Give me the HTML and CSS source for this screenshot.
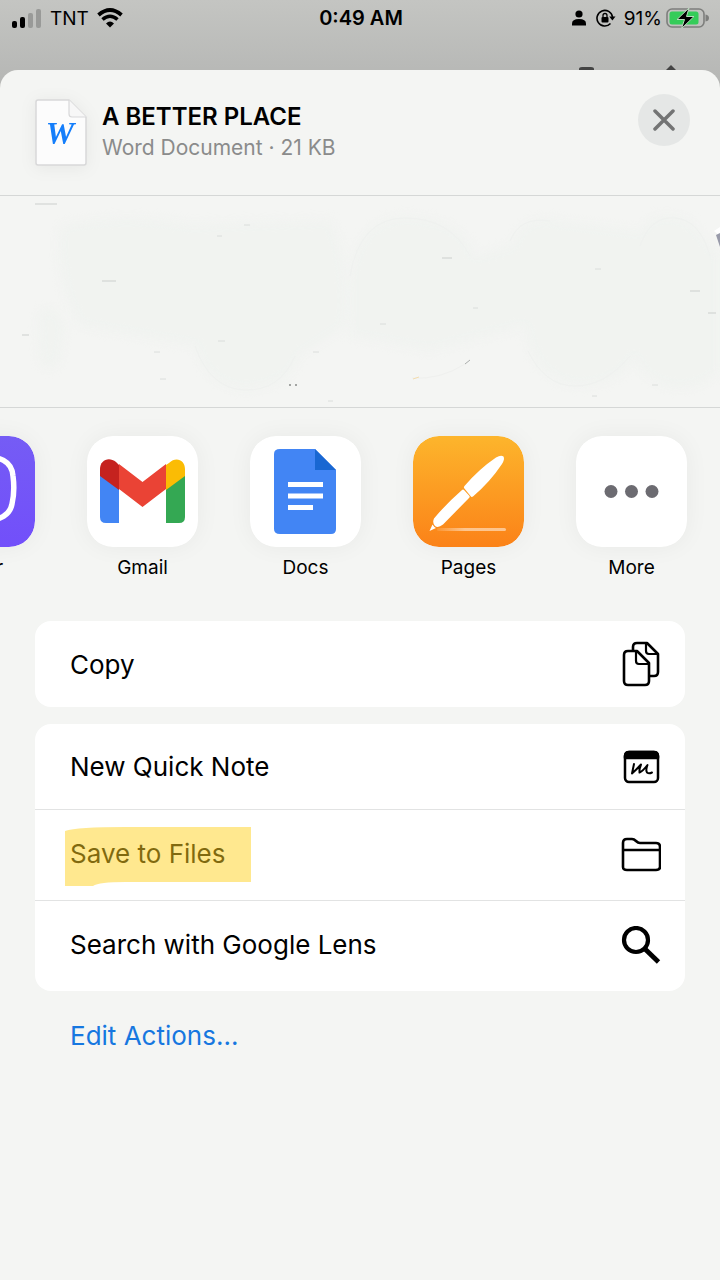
FILE: index.html
```html
<!DOCTYPE html>
<html lang="en">
<head>
    <meta charset="UTF-8">
    <meta name="viewport" content="width=device-width, initial-scale=1.0">
    <title>Share</title>
    <link rel="stylesheet" href="styles.css">
</head>
<body>

    <!-- Status bar -->
    <div class="status-bar">
        <div class="status-left">
            <svg width="30" height="20" viewBox="0 0 30 20">
                <rect x="0" y="13" width="5" height="7" rx="2" />
                <rect x="8" y="9" width="5" height="11" rx="2" />
                <rect x="16" y="5" width="5" height="15" rx="2" fill="#999a98" />
                <rect x="24" y="1" width="5" height="19" rx="2" fill="#999a98" />
            </svg>
            <span>TNT</span>
            <svg width="26" height="20" viewBox="0 0 26 20" fill="none" stroke="#000" stroke-width="3.800">
                <path d="M1.500 7Q13 -3 24.500 7" />
                <path d="M5.500 11.500Q13 5 20.500 11.500" stroke-width="3.600" />
                <path d="M9 15.500Q13 11.500 17 15.500L13 19.500Z" fill="#000" stroke="none" />
            </svg>
        </div>
        <div class="status-time">0:49 AM</div>
        <div class="status-right">
            <svg width="14" height="16" viewBox="0 0 14 16">
                <circle cx="7" cy="4" r="3.600" />
                <path d="M0 15.500V13.500Q0 9 7 9T14 13.500V15.500Z" />
            </svg>
            <svg class="lock" width="20" height="18" viewBox="0 0 20 18">
                <path d="M14.500 14.500A7.800 7.800 0 1 1 16.500 8" fill="none" stroke="#000" stroke-width="1.600" />
                <path d="M13.200 7.500H19.500L16.400 11.500Z" />
                <rect x="5.500" y="8" width="7" height="5.500" rx="1" />
                <path d="M7 8V6.500A2 2 0 0 1 11 6.500V8" fill="none" stroke="#000" stroke-width="1.300" />
            </svg>
            <span>91%</span>
            <svg width="44" height="22" viewBox="0 0 44 22">
                <rect x="1" y="2" width="37" height="18" rx="5" fill="none" stroke="#7d7e7c" stroke-width="1.600" />
                <rect x="3.500" y="4.500" width="29" height="13" rx="2.500" fill="#35cc59" />
                <path d="M39.500 7.500Q43 8 43 11T39.500 14.500Z" fill="#7d7e7c" />
                <path d="M23 1L11 12.500H18.500L15.500 21.500L28 9.500H20.500Z" stroke="#b9d9bd" stroke-width="1" />
            </svg>
        </div>
    </div>

    <!-- Toolbar of the app behind the sheet -->
    <div class="behind">
        <svg width="15" height="5" viewBox="0 0 15 5" fill="#444"><path d="M0 5V4Q0 2 3 2H12Q15 2 15 4V5Z" /></svg>
        <svg width="10" height="5" viewBox="0 0 10 5" fill="#444"><path d="M0 5L5 0L10 5Z" /></svg>
    </div>

    <div class="sheet">
        <div class="sheet-header">
            <svg class="doc-icon" width="52" height="68" viewBox="0 0 52 68">
                <path d="M3 1H34L51 18V64Q51 66 49 66H3Q1 66 1 64V3Q1 1 3 1Z" fill="#fcfcfc" stroke="#d8d8d9" stroke-width="1.500" />
                <path d="M34 1V15Q34 18 37 18H51" fill="#f7f7f7" stroke="#d8d8d9" stroke-width="1.200" />
                <text class="doc-letter" x="25" y="45" text-anchor="middle">W</text>
            </svg>
            <div class="doc-info">
                <h1>A BETTER PLACE</h1>
                <p>Word Document · 21 KB</p>
            </div>
            <button class="close" aria-label="Close">
                <svg width="22" height="22" viewBox="0 0 22 22" fill="none" stroke="#737474" stroke-width="3.500" stroke-linecap="round"><path d="M2 2L20 20M20 2L2 20" /></svg>
            </button>
        </div>

        <!-- Contacts row, wiped out -->
        <div class="contacts">
            <svg viewBox="0 0 720 211" preserveAspectRatio="none">
                <g class="smudge" fill="#eff1ef">
                    <path d="M60 30Q120 15 190 28L330 24Q350 60 345 130L300 160Q290 190 245 194Q205 190 195 150L80 130Q55 90 60 30Z" opacity=".6" />
                    <path d="M350 75Q360 20 410 20Q465 25 475 60L510 50Q525 15 560 25L640 35Q655 10 690 25L720 60V175Q700 194 675 192Q640 185 635 160Q620 190 575 190Q530 180 525 130L430 155L350 140Z" opacity=".6" />
                    <path d="M38 120Q50 100 65 130L60 165Q48 180 40 165Z" opacity=".6" />
                </g>
                <g fill="none" stroke="#eff1ef">
                    <path d="M350 80Q360 22 405 22T470 60" />
                    <path d="M510 45Q520 20 550 25" />
                    <path d="M640 50Q650 20 675 22T710 60" />
                    <path d="M195 150Q210 193 245 194T295 160" />
                    <path d="M528 155Q545 190 575 190T630 160" />
                </g>
                <g stroke="#cccfcd">
                    <path d="M35 8H57M102 85H116M442 62H452M690 95H700M708 117H716M22 139H29M7 212H12" />
                    <path d="M244 29H250M217 40H222M595 73H601M473 112H478M380 128H386M218 145H225M154 156H160M313 156H319M160 183H166M328 205H333M592 200H597M652 189H658" opacity=".6" />
                </g>
                <path d="M465 168L470 164" stroke="#aaadab" />
                <path d="M412 182Q440 184 465 168" fill="none" stroke="#eff0ee" />
                <path d="M413 183L419 181" stroke="#f3dcae" />
                <path d="M290 188V190M295 189H297" stroke="#888a89" stroke-width="1.500" />
                <path d="M714 35L720 31V40Z" fill="#fff" />
                <path d="M716 39L720 37V51Z" fill="#999baa" />
            </svg>
        </div>

        <!-- Apps -->
        <div class="apps">
            <a class="app" href="#">
                <svg viewBox="0 0 111 111">
                    <defs>
                        <linearGradient id="violet" x1="0" y1="0" x2="0" y2="1"><stop offset="0" stop-color="#755cf5" /><stop offset="1" stop-color="#724ffa" /></linearGradient>
                    </defs>
                    <rect width="111" height="111" rx="26" fill="url(#violet)" />
                    <path d="M55 20C76 20 88 25 89 40Q91 55 88 68C86 79 76 84 64 84L48 96V84C28 84 22 77 20 64Q18 50 21 38C24 24 36 20 55 20Z" fill="none" stroke="#fff" stroke-width="5.500" />
                </svg>
                <span>Viber</span>
            </a>
            <a class="app" href="#">
                <svg viewBox="0 0 111 111">
                    <rect width="111" height="111" rx="26" fill="#fff" />
                    <path d="M13 38L32 52V87H19Q13 87 13 81Z" fill="#4285f4" />
                    <path d="M79 52L98 38V81Q98 87 92 87H79Z" fill="#34a853" />
                    <path d="M79 29L82 27C89 20 98 24 98 33V40L79 54Z" fill="#fbbc04" />
                    <path d="M13 40V33C13 24 22 20 29 26L32 29V54Z" fill="#c5221f" />
                    <path d="M32 28L55.500 46L79 28V53L55.500 71L32 53Z" fill="#ea4335" />
                </svg>
                <span>Gmail</span>
            </a>
            <a class="app" href="#">
                <svg viewBox="0 0 111 111">
                    <rect width="111" height="111" rx="26" fill="#fff" />
                    <path d="M30 13H65L86 34V93Q86 98 81 98H30Q24 98 24 93V18Q24 13 30 13Z" fill="#4285f4" />
                    <path d="M65 13L86 34H65Z" fill="#1967d2" />
                    <path d="M38 48.500H73M38 60H73M38 71.500H63" stroke="#fff" stroke-width="5" />
                </svg>
                <span>Docs</span>
            </a>
            <a class="app" href="#">
                <svg viewBox="0 0 111 111">
                    <defs>
                        <linearGradient id="orange" x1="0" y1="0" x2="0" y2="1"><stop offset="0" stop-color="#fdb52c" /><stop offset="1" stop-color="#fb8218" /></linearGradient>
                        <linearGradient id="line" x1="0" x2="1"><stop offset="0" stop-color="#fff" stop-opacity=".1" /><stop offset=".4" stop-color="#fff" stop-opacity=".5" /></linearGradient>
                    </defs>
                    <rect width="111" height="111" rx="26" fill="url(#orange)" />
                    <rect x="24" y="92" width="69" height="3" rx="1.500" fill="url(#line)" />
                    <g fill="#fff">
                        <path d="M49 54Q50 53 51 54L56.500 60Q57 61 56 62L30 88.500Q25 92.500 22 90Q19 87 21 82.500Q33 68 49 54Z" />
                        <path d="M51 52Q50.500 51 51.500 50Q66 33 83 21.500Q88 18.500 90.500 20.500Q92 23 89 28Q77 46 60 60.500Q58.500 61.500 57.500 60Z" />
                        <path d="M19.500 88.500Q21 91 23 92L16.500 95Z" />
                    </g>
                </svg>
                <span>Pages</span>
            </a>
            <a class="app" href="#">
                <svg viewBox="0 0 111 111">
                    <rect width="111" height="111" rx="26" fill="#fff" />
                    <g fill="#6c6b71"><circle cx="35" cy="55.500" r="6.500" /><circle cx="55.500" cy="55.500" r="6.500" /><circle cx="76" cy="55.500" r="6.500" /></g>
                </svg>
                <span>More</span>
            </a>
        </div>

        <!-- Actions -->
        <div class="actions">
            <button class="action">
                <span>Copy</span>
                <svg width="40" height="46" viewBox="0 0 40 46" fill="none" stroke="#000" stroke-width="2.600" stroke-linejoin="round">
                    <path d="M12 10V6Q12 2 16 2H26L37 13V31Q37 35 33 35H29" />
                    <path d="M25 2V10Q25 13 28 13H37" stroke-width="2.200" />
                    <path d="M7 10H16L28 22V40Q28 44 24 44H7Q3 44 3 40V14Q3 10 7 10Z" />
                    <path d="M15 10V20Q15 23 18 23H28" stroke-width="2.200" />
                </svg>
            </button>
        </div>

        <div class="actions">
            <button class="action first">
                <span>New Quick Note</span>
                <svg width="40" height="36" viewBox="0 0 40 36" fill="none" stroke="#000" stroke-width="2.500" stroke-linecap="round" stroke-linejoin="round">
                    <rect x="4" y="3" width="33" height="30" rx="4" />
                    <path d="M4 9V7Q4 3 8 3H33Q37 3 37 7V9Z" fill="#000" />
                    <path d="M13 15L11 24.500Q15 21 20 15.500Q18 20 18.500 23.500Q22 22 26.500 16Q24.500 21 26 23.500Q28 25 31 23.500" stroke-width="2" />
                </svg>
            </button>
            <button class="action tall">
                <span class="marked">
                    <svg class="marker" viewBox="0 0 186 59" preserveAspectRatio="none"><path d="M0 4Q12 0 60 0H186V55H60Q34 55 28 59H0Z" fill="#ffd21f" opacity=".5" /></svg>
                    Save to Files
                </span>
                <svg width="40" height="36" viewBox="0 0 40 36" fill="none" stroke="#000" stroke-width="2.600">
                    <path d="M2 30V6Q2 2 6 2H11Q13 2 15 4Q17 6 19 6H35Q39 6 39 10V30Q39 33 35 33H6Q2 33 2 30ZM2 13H39" />
                </svg>
            </button>
            <button class="action tall">
                <span>Search with Google Lens</span>
                <svg width="40" height="40" viewBox="0 0 40 40" fill="none" stroke="#000">
                    <circle cx="15" cy="14" r="12" stroke-width="4.200" />
                    <path d="M23.500 22.500L37.500 36" stroke-width="4.800" />
                </svg>
            </button>
        </div>

        <a class="edit" href="#">Edit Actions...</a>
    </div>

</body>
</html>
```

FILE: styles.css
```css
* {
    box-sizing: border-box;
}

body {
    margin: 0;
    min-height: 100vh;
    display: flex;
    flex-direction: column;
    font-family: Inter, "Liberation Sans", sans-serif;
    color: #000;
    background: linear-gradient(#c4c5c2, #b6b7b5 80px);
    overflow-x: hidden;
}

svg {
    display: block;
    flex-shrink: 0;
}

/* Status bar */
.status-bar {
    display: grid;
    grid-template-columns: 1fr auto 1fr;
    align-items: center;
    height: 36px;
    padding: 0 10px 0 12px;
    font-size: 19px;
}

.status-left,
.status-right {
    display: flex;
    align-items: center;
    gap: 8px;
}

.status-right {
    justify-content: flex-end;
    gap: 4px;
}

.lock {
    margin: 0 4px 0 6px;
}

.status-time {
    font-size: 20px;
    font-weight: 600;
}

.behind {
    display: flex;
    justify-content: flex-end;
    align-items: flex-end;
    gap: 72px;
    height: 34px;
    padding-right: 44px;
}

/* Sheet */
.sheet {
    flex: 1;
    background: #f4f5f3;
    border-radius: 18px 18px 0 0;
}

.sheet-header {
    display: flex;
    align-items: flex-start;
    height: 126px;
    padding: 24px 30px 0 35px;
    border-bottom: 1px solid #d5d7d6;
}

.doc-icon {
    margin-top: 5px;
    filter: drop-shadow(0 2px 8px rgba(0, 0, 0, 0.06));
}

.doc-letter {
    font-family: "Liberation Serif", serif;
    font-size: 32px;
    font-style: italic;
    font-weight: bold;
    fill: #147efb;
}

.doc-info {
    flex: 1;
    padding: 8px 0 0 15px;
}

.doc-info h1 {
    margin: 0;
    font-size: 24px;
    font-weight: 600;
    line-height: 30px;
}

.doc-info p {
    margin: 0;
    font-size: 21px;
    line-height: 32px;
    color: #8a8b8b;
}

.close {
    display: flex;
    align-items: center;
    justify-content: center;
    width: 52px;
    height: 52px;
    padding: 0;
    border: none;
    border-radius: 50%;
    background: #e5e7e6;
}

.contacts {
    height: 212px;
    border-bottom: 1px solid #d5d7d6;
}

.contacts svg {
    width: 100%;
    height: 100%;
}

.smudge {
    filter: blur(5px);
}

/* Apps */
.apps {
    display: flex;
    justify-content: flex-end;
    gap: 52px;
    padding: 28px 33px 0 0;
    overflow: hidden;
}

.app {
    flex: 0 0 111px;
    color: #000;
    font-size: 19px;
    line-height: 28px;
    text-align: center;
    text-decoration: none;
}

.app svg {
    margin-bottom: 7px;
    border-radius: 26px;
    box-shadow: 0 0 24px rgba(0, 0, 0, 0.05);
}

/* Actions */
.actions {
    margin: 17px 35px 0;
    border-radius: 16px;
    background: #fff;
    overflow: hidden;
}

.apps + .actions {
    margin-top: 39px;
}

.action {
    display: flex;
    align-items: center;
    justify-content: space-between;
    width: 100%;
    height: 86px;
    padding: 0 24px 0 35px;
    border: none;
    background: none;
    color: #000;
    font-family: inherit;
    font-size: 26px;
    text-align: left;
}

.action.first {
    height: 85px;
}

.action.tall {
    height: 91px;
    border-top: 1px solid #e2e3e3;
}

.action.tall span {
    padding-bottom: 4px;
}

/* Highlighter stroke over the label */
.marked {
    position: relative;
}

.marker {
    position: absolute;
    top: -11px;
    left: -5px;
    width: 186px;
    height: 59px;
}

.edit {
    display: inline-block;
    margin: 25px 70px;
    font-size: 26px;
    line-height: 40px;
    color: #1677e0;
    text-decoration: none;
}
```
